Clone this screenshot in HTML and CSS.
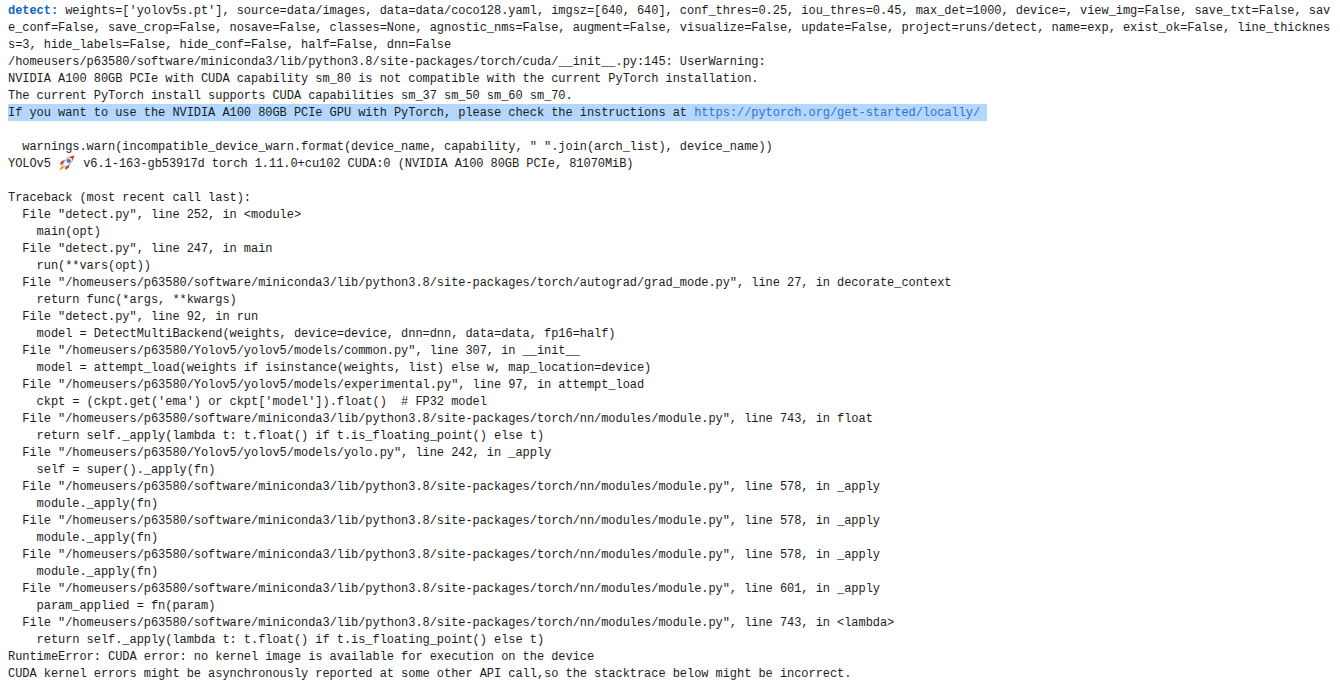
FILE: index.html
```html
<!DOCTYPE html>
<html lang="en">
<head>
<meta charset="utf-8">
<title>detect.py output</title>
<link rel="stylesheet" href="styles.css">
</head>
<body>
<pre class="log"><span class="prefix">detect:</span> weights=['yolov5s.pt'], source=data/images, data=data/coco128.yaml, imgsz=[640, 640], conf_thres=0.25, iou_thres=0.45, max_det=1000, device=, view_img=False, save_txt=False, save_conf=False, save_crop=False, nosave=False, classes=None, agnostic_nms=False, augment=False, visualize=False, update=False, project=runs/detect, name=exp, exist_ok=False, line_thickness=3, hide_labels=False, hide_conf=False, half=False, dnn=False
/homeusers/p63580/software/miniconda3/lib/python3.8/site-packages/torch/cuda/__init__.py:145: UserWarning: 
NVIDIA A100 80GB PCIe with CUDA capability sm_80 is not compatible with the current PyTorch installation.
The current PyTorch install supports CUDA capabilities sm_37 sm_50 sm_60 sm_70.
<span class="selected">If you want to use the NVIDIA A100 80GB PCIe GPU with PyTorch, please check the instructions at <a class="link" href="#">https://pytorch.org/get-started/locally/</a> </span>

  warnings.warn(incompatible_device_warn.format(device_name, capability, " ".join(arch_list), device_name))
YOLOv5 <svg class="rocket" viewBox="0 0 18 17" aria-hidden="true"><path d="M3.4 10.8 L.6 16.4 L6.2 13.6 Z" fill="#f09a26"/><path d="M4 10 L1.2 10 L3.6 6.2 L7.4 5.6 Z" fill="#d63c2a"/><path d="M7.2 13.2 L7.2 16 L11 13.4 L11.6 9.6 Z" fill="#c4302a"/><path d="M4.2 10 C5.8 6 8.8 3 12.6 1.6 L15.4 4.4 C14 8.2 11 11.2 7 12.8 Z" fill="#eef1f4" stroke="#6f7a86" stroke-width=".7"/><path d="M12.2 2 C13.4 1.2 15.2 .6 16.8 .4 C16.6 2 16 3.8 15 5 Z" fill="#cf3528"/><circle cx="10.8" cy="6.2" r="1.8" fill="#2f86d8" stroke="#4a5560" stroke-width=".7"/></svg> v6.1-163-gb53917d torch 1.11.0+cu102 CUDA:0 (NVIDIA A100 80GB PCIe, 81070MiB)

Traceback (most recent call last):
  File "detect.py", line 252, in &lt;module&gt;
    main(opt)
  File "detect.py", line 247, in main
    run(**vars(opt))
  File "/homeusers/p63580/software/miniconda3/lib/python3.8/site-packages/torch/autograd/grad_mode.py", line 27, in decorate_context
    return func(*args, **kwargs)
  File "detect.py", line 92, in run
    model = DetectMultiBackend(weights, device=device, dnn=dnn, data=data, fp16=half)
  File "/homeusers/p63580/Yolov5/yolov5/models/common.py", line 307, in __init__
    model = attempt_load(weights if isinstance(weights, list) else w, map_location=device)
  File "/homeusers/p63580/Yolov5/yolov5/models/experimental.py", line 97, in attempt_load
    ckpt = (ckpt.get('ema') or ckpt['model']).float()  # FP32 model
  File "/homeusers/p63580/software/miniconda3/lib/python3.8/site-packages/torch/nn/modules/module.py", line 743, in float
    return self._apply(lambda t: t.float() if t.is_floating_point() else t)
  File "/homeusers/p63580/Yolov5/yolov5/models/yolo.py", line 242, in _apply
    self = super()._apply(fn)
  File "/homeusers/p63580/software/miniconda3/lib/python3.8/site-packages/torch/nn/modules/module.py", line 578, in _apply
    module._apply(fn)
  File "/homeusers/p63580/software/miniconda3/lib/python3.8/site-packages/torch/nn/modules/module.py", line 578, in _apply
    module._apply(fn)
  File "/homeusers/p63580/software/miniconda3/lib/python3.8/site-packages/torch/nn/modules/module.py", line 578, in _apply
    module._apply(fn)
  File "/homeusers/p63580/software/miniconda3/lib/python3.8/site-packages/torch/nn/modules/module.py", line 601, in _apply
    param_applied = fn(param)
  File "/homeusers/p63580/software/miniconda3/lib/python3.8/site-packages/torch/nn/modules/module.py", line 743, in &lt;lambda&gt;
    return self._apply(lambda t: t.float() if t.is_floating_point() else t)
RuntimeError: CUDA error: no kernel image is available for execution on the device
CUDA kernel errors might be asynchronously reported at some other API call,so the stacktrace below might be incorrect.
</pre>
</body>
</html>
```
FILE: styles.css
```css
html, body {
  margin: 0;
  background: #fff;
}
body {
  padding: 3px 8px 0;
  overflow: hidden;
}
.log {
  margin: 0;
  width: 1324px;
  font-family: "Liberation Mono", monospace;
  font-size: 12px;
  letter-spacing: -0.054px;
  line-height: 17px;
  color: #1a1d21;
  white-space: pre-wrap;
  word-break: break-all;
}
.prefix {
  color: #0b63c9;
  font-weight: bold;
}
.selected {
  background: #b3d7ff;
  display: inline-block;
  line-height: 15px;
  padding-top: 2px;
  margin-top: -1px;
}
.link {
  color: #2f73c9;
  text-decoration: none;
}
.rocket {
  width: 18px;
  height: 16px;
  margin: -1px 0;
  vertical-align: -3px;
}
```
